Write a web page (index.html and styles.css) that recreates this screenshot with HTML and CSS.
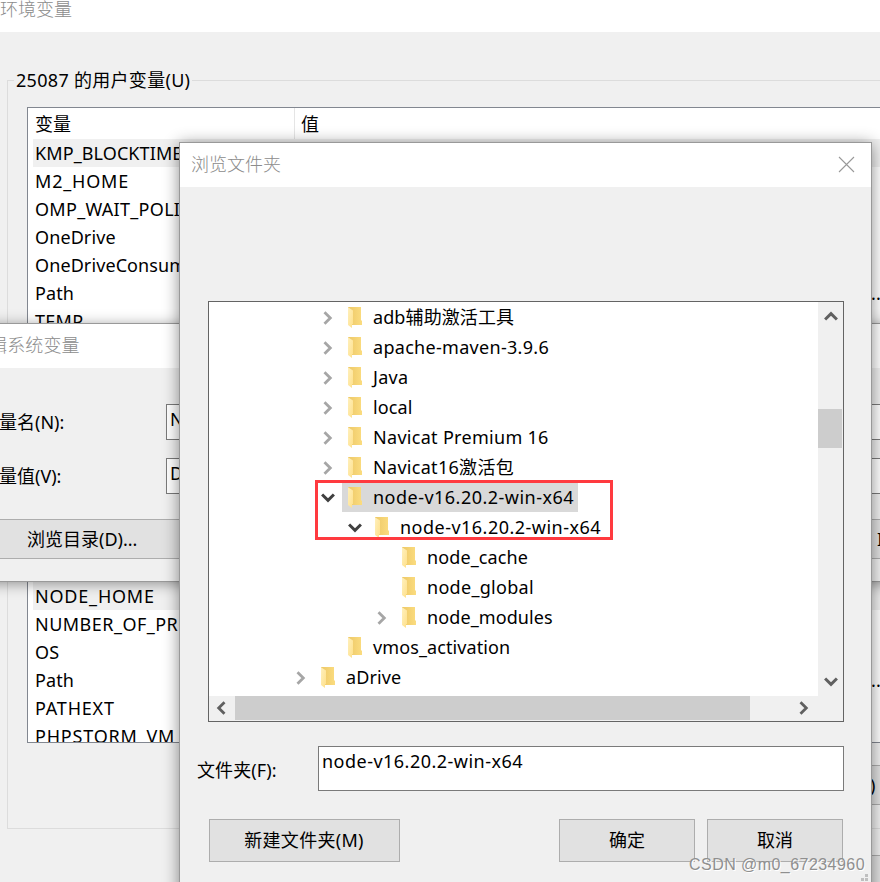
FILE: index.html
```html
<!DOCTYPE html>
<html lang="zh-CN">
<head>
<meta charset="utf-8">
<title>环境变量</title>
<link rel="stylesheet" href="styles.css">
</head>
<body>
<svg class="defs" width="0" height="0">
  <defs>
    <linearGradient id="back" x1="0" x2="1" y1="0" y2="0"><stop offset="0" stop-color="#edc867"/><stop offset="1" stop-color="#fbdc7f"/></linearGradient>
    <linearGradient id="front" x1="0" x2="1" y1="0" y2="1"><stop offset="0" stop-color="#fff0bd"/><stop offset="1" stop-color="#fee08a"/></linearGradient>
    <symbol id="folder" viewBox="0 0 15 22"><path fill="url(#back)" d="M0 0H13V13.5H14V18H0Z"/><path fill="url(#front)" d="M0 .3L5 3.4V17L4 17.2V21L0 18Z"/></symbol>
    <symbol id="right" viewBox="0 0 10 14"><path d="M1.5 1.2L7.3 7L1.5 12.8" fill="none" stroke="currentColor" stroke-width="2.8"/></symbol>
    <symbol id="down" viewBox="0 0 14 10"><path d="M1.1 1.5L7 7.3L12.9 1.5" fill="none" stroke="currentColor" stroke-width="3"/></symbol>
  </defs>
</svg>
<div class="desktop">
  <section class="env">
    <header class="env-title">环境变量</header>
    <div class="group user">
      <span class="legend">25087 的用户变量(U)</span>
      <div class="list">
        <div class="head"><span class="col-name">变量</span><span>值</span></div>
        <div class="var hot">KMP_BLOCKTIME</div>
        <div class="var wide">M2_HOME</div>
        <div class="var loose">OMP_WAIT_POLICY</div>
        <div class="var">OneDrive</div>
        <div class="var">OneDriveConsumer</div>
        <div class="var"><span class="var-name">Path</span><span>...</span></div>
        <div class="var loose">TEMP</div>
      </div>
    </div>
    <div class="group system">
      <div class="list">
        <div class="var hot wide">NODE_HOME</div>
        <div class="var version">NUMBER_OF_PROCESSORS</div>
        <div class="var">OS</div>
        <div class="var"><span class="var-name">Path</span><span>...</span></div>
        <div class="var wide">PATHEXT</div>
        <div class="var wide">PHPSTORM_VM</div>
      </div>
      <div class="btn remove">)</div>
    </div>
    <div class="btn env-cancel"></div>
  </section>

  <section class="edit">
    <header class="edit-title">编辑系统变量</header>
    <div class="edit-row"><label>变量名(N):</label><div class="input">NODE_HOME</div></div>
    <div class="edit-row"><label>变量值(V):</label><div class="input">D:\</div></div>
    <div class="edit-actions"><div class="btn browse">浏览目录(D)...</div><div class="btn file">I</div></div>
  </section>

  <section class="dialog">
    <header class="dialog-title"><span>浏览文件夹</span>
      <svg width="17" height="17" viewBox="0 0 17 17"><path d="M1 1L16 16M16 1L1 16" stroke="#999" stroke-width="1.1"/></svg>
    </header>
    <div class="tree">
      <div class="viewport">
        <div class="rows">
          <div class="row"><i><svg class="r"><use href="#right"/></svg></i><span class="node"><svg class="f"><use href="#folder"/></svg>adb辅助激活工具</span></div>
          <div class="row"><i><svg class="r"><use href="#right"/></svg></i><span class="node"><svg class="f"><use href="#folder"/></svg><span class="loose">apache-maven-3.9.6</span></span></div>
          <div class="row"><i><svg class="r"><use href="#right"/></svg></i><span class="node"><svg class="f"><use href="#folder"/></svg><span class="loose">Java</span></span></div>
          <div class="row"><i><svg class="r"><use href="#right"/></svg></i><span class="node"><svg class="f"><use href="#folder"/></svg>local</span></div>
          <div class="row"><i><svg class="r"><use href="#right"/></svg></i><span class="node"><svg class="f"><use href="#folder"/></svg><span class="loose">Navicat Premium 16</span></span></div>
          <div class="row"><i><svg class="r"><use href="#right"/></svg></i><span class="node"><svg class="f"><use href="#folder"/></svg><span class="loose">Navicat16激活包</span></span></div>
          <div class="row"><i><svg class="d"><use href="#down"/></svg></i><span class="node selected"><svg class="f"><use href="#folder"/></svg><span class="version">node-v16.20.2-win-x64</span></span></div>
          <div class="row in1"><i><svg class="d"><use href="#down"/></svg></i><span class="node"><svg class="f"><use href="#folder"/></svg><span class="version">node-v16.20.2-win-x64</span></span></div>
          <div class="row in2"><i></i><span class="node"><svg class="f"><use href="#folder"/></svg>node_cache</span></div>
          <div class="row in2"><i></i><span class="node"><svg class="f"><use href="#folder"/></svg><span class="loose">node_global</span></span></div>
          <div class="row in2"><i><svg class="r"><use href="#right"/></svg></i><span class="node"><svg class="f"><use href="#folder"/></svg>node_modules</span></div>
          <div class="row"><i></i><span class="node"><svg class="f"><use href="#folder"/></svg>vmos_activation</span></div>
          <div class="row out1"><i><svg class="r"><use href="#right"/></svg></i><span class="node"><svg class="f"><use href="#folder"/></svg>aDrive</span></div>
        </div>
        <div class="vbar"><svg class="d up"><use href="#down"/></svg><div class="vthumb"></div><svg class="d"><use href="#down"/></svg></div>
      </div>
      <div class="hbar"><svg class="r left"><use href="#right"/></svg><div class="hthumb"></div><svg class="r"><use href="#right"/></svg></div>
      <div class="mark"></div>
    </div>
    <div class="field"><label>文件夹(F):</label><div class="input version">node-v16.20.2-win-x64</div></div>
    <div class="actions"><div class="btn new">新建文件夹(M)</div><div class="btn">确定</div><div class="btn">取消</div></div>
    <svg class="grip" width="7" height="7"><path fill="#bfbfbf" d="M4 0h3v3h-3zM0 4h3v3h-3zM4 4h3v3h-3z"/></svg>
  </section>
  <div class="watermark">CSDN @m0_67234960</div>
</div>
</body>
</html>
```
FILE: styles.css
```css
* { box-sizing: border-box; }
body { margin: 0; background: #f0f0f0; }
.defs { position: absolute; }
.desktop {
  position: relative; width: 880px; height: 882px; overflow: hidden;
  font: 18px/28px "Noto Sans", "Noto Sans CJK SC", sans-serif;
  letter-spacing: .1px;
  color: #000; white-space: nowrap; background: #f0f0f0;
}
.btn { display: flex; align-items: center; justify-content: center; padding-bottom: 1px; background: #e1e1e1; border: 1px solid #adadad; }
.input { background: #fff; border: 1px solid #7a7a7a; overflow: hidden; }
.wide { letter-spacing: .8px; }
.loose { letter-spacing: .3px; }
.version { letter-spacing: .48px; }

/* environment variables window */
.env { position: absolute; inset: 0 -40px 0 0; display: flex; flex-direction: column; }
.env-title { flex: none; height: 32px; background: #fff; color: #8c8c8c; line-height: 19px; font-weight: 300; letter-spacing: 0; }
.group { flex: none; margin-left: 7px; border: 1px solid #dcdcdc; padding-left: 19px; }
.user { margin-top: 48px; height: 320px; }
.legend { display: block; width: max-content; height: 26px; margin: -15px 0 0 -13px; padding: 0 2px; background: #f0f0f0; letter-spacing: .3px; }
.list { border: 1px solid #828790; background: #fff; overflow: hidden; padding-left: 5px; }
.user .list { height: 270px; margin-top: 15px; }
.head { display: flex; height: 31px; line-height: 33px; }
.head span { padding-left: 6px; }
.head .col-name { width: 262px; padding-left: 2px; border-right: 1px solid #e5e5e5; }
.var { display: flex; height: 28px; padding-left: 2px; line-height: 28px; }
.var-name { width: 836px; }
.hot { background: #f0f0f0; }
.system { margin-top: 20px; height: 409px; }
.system .list { height: 322px; padding-top: 160px; }
.remove { width: 160px; height: 40px; margin: 22px 0 0 700px; padding-left: 142px; justify-content: flex-start; }
.env-cancel { flex: none; height: 40px; width: 160px; margin: 26px 0 0 760px; }

/* edit system variable window */
.edit {
  position: absolute; left: -60px; top: 323px; width: 1000px; height: 259px;
  background: #f0f0f0; border: 1px solid #999; box-shadow: 0 2px 13px rgba(0,0,0,.4);
}
.edit-title { height: 44px; padding-left: 30px; line-height: 43px; color: #8c8c8c; background: #fff; font-weight: 300; }
.edit-row { display: flex; height: 36px; margin-top: 36px; padding-left: 40px; letter-spacing: 0; }
.edit-row + .edit-row { margin-top: 18px; }
.edit-row label { width: 185px; line-height: 36px; }
.edit-row .input { width: 760px; padding-left: 3px; line-height: 29px; }
.edit-actions { display: flex; gap: 100px; margin-top: 25px; }
.edit-actions .btn { height: 40px; }
.browse { width: 310px; padding-left: 85px; justify-content: flex-start; letter-spacing: 0; }
.file { flex: 1; padding-left: 525px; justify-content: flex-start; }

/* browse for folder dialog */
.dialog {
  position: absolute; left: 179px; top: 142px; width: 693px; height: 760px;
  background: #f0f0f0; border: 1px solid #999; box-shadow: 0 2px 15px rgba(0,0,0,.45);
}
.dialog-title { display: flex; align-items: center; justify-content: space-between; height: 44px; padding: 0 16px 1px 11px; color: #8c8c8c; background: #fff; font-weight: 300; letter-spacing: 0; }
.dialog-title span { padding-bottom: 1px; }
.tree { position: relative; width: 636px; height: 421px; margin: 114px 0 0 28px; border: 1px solid #646464; background: #fff; }
.viewport { display: flex; height: 394px; }
.rows { flex: 1; overflow: hidden; }
.row { display: flex; align-items: center; height: 30px; padding-left: 106px; }
.in1 { padding-left: 133px; }
.in2 { padding-left: 160px; }
.out1 { padding-left: 79px; }
.row i { display: flex; justify-content: center; width: 27px; color: #a6a6a6; padding: 2px 2px 0 0; }
.row i .d { color: #404040; }
.node { display: flex; align-items: center; height: 29px; padding: 0 4px 0 6px; }
.selected { background: #d9d9d9; }
.f { width: 15px; height: 22px; margin: 2px 10px 0 0; }
.r { width: 10px; height: 14px; flex: none; }
.d { width: 14px; height: 10px; flex: none; }
.up { transform: scaleY(-1); }
.left { transform: scaleX(-1); }
.vbar { display: flex; flex-direction: column; align-items: center; width: 25px; padding: 9px 0 9px 0; background: #f0f0f0; color: #606060; }
.vthumb { width: 24px; height: 39px; margin: 88px 1px auto 0; background: #cdcdcd; }
.hbar { display: flex; align-items: center; height: 25px; padding: 0 34px 1px 7px; background: #f0f0f0; color: #606060; }
.hthumb { width: 515px; height: 24px; margin: 0 auto 0 9px; background: #cdcdcd; }
.mark { position: absolute; left: 106px; top: 178px; width: 298px; height: 60px; border: 3px solid #ff3a3f; }
.field { display: flex; align-items: center; height: 45px; margin: 24px 0 0 17px; }
.field label { width: 121px; padding-top: 3px; }
.field .input { width: 526px; height: 45px; padding-left: 3px; }
.actions { display: flex; gap: 12px; margin: 28px 0 0 29px; }
.actions .btn { width: 136px; height: 43px; }
.actions .new { width: 191px; margin-right: 147px; padding-right: 1px; letter-spacing: .3px; }
.grip { position: absolute; left: 681px; top: 731px; }
.watermark {
  position: absolute; left: 689px; top: 855px; font: 16px/20px "Liberation Sans", sans-serif;
  letter-spacing: .45px; color: #8f8f8f; text-shadow: 1px 1px 0 #fff;
}
```
